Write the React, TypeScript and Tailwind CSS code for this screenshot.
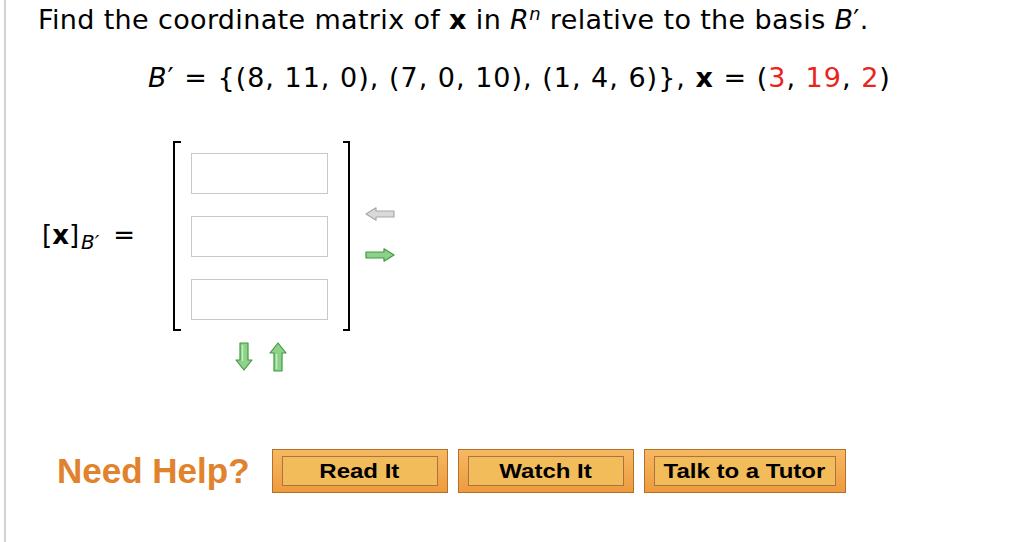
import React from 'react'

const math = { fontFamily: '"DejaVu Sans", Verdana, sans-serif' }

function HArrow({ dir, color }: { dir: 'left' | 'right'; color: 'gray' | 'green' }) {
  const fill = color === 'gray' ? '#d9d9d9' : '#8fd18a'
  const stroke = color === 'gray' ? '#a8a8a8' : '#3f9a3f'
  const d =
    dir === 'right'
      ? 'M1 4 H19 V0.8 L29 7 L19 13.2 V10 H1 Z'
      : 'M29 4 H11 V0.8 L1 7 L11 13.2 V10 H29 Z'
  return (
    <svg width="30" height="14" viewBox="0 0 30 14">
      <path d={d} fill={fill} stroke={stroke} strokeWidth="1.2" strokeLinejoin="round" />
    </svg>
  )
}

function VArrow({ dir }: { dir: 'up' | 'down' }) {
  const d =
    dir === 'down'
      ? 'M5 1 H13 V18 H17 L9 28 L1 18 H5 Z'
      : 'M5 29 H13 V11 H17 L9 1 L1 11 H5 Z'
  return (
    <svg width="18" height="30" viewBox="0 0 18 30">
      <path d={d} fill="#8fd18a" stroke="#3f9a3f" strokeWidth="1.2" strokeLinejoin="round" />
      <path d={dir === 'down' ? 'M7.5 3 V19' : 'M7.5 12 V27'} stroke="#c4ecc0" strokeWidth="1.5" />
    </svg>
  )
}

function HelpButton({ label, width }: { label: string; width: string }) {
  return (
    <div
      className={`${width} h-[44px] border border-[#b36f2c] bg-gradient-to-b from-[#f7b862] to-[#ee9b3c] px-[9px] py-[6px]`}
    >
      <div className="h-full border border-[#a9743f] bg-[#f3bc5a] flex items-center justify-center">
        <span
          className="inline-block scale-x-120 text-[20px] font-bold text-black"
          style={{ fontFamily: '"Liberation Sans", Arial, sans-serif' }}
        >
          {label}
        </span>
      </div>
    </div>
  )
}

export default function App() {
  return (
    <div className="w-[1024px] h-[542px] bg-white overflow-hidden">
      <div className="ml-[4px] h-full border-l-2 border-[#d2d2d2] pl-[32px] pt-[1px]" style={math}>
        <p className="text-[27px] leading-[38px] tracking-[0.35px] text-black">
          Find the coordinate matrix of <b>x</b> in <i>R</i>
          <sup className="italic text-[18px]">n</sup> relative to the basis <i>B</i>′.
        </p>

        <p className="mt-[20px] pl-[110px] text-[27px] leading-[38px] tracking-[1px] text-black">
          <i>B</i>′ = {'{'}(8, 11, 0), (7, 0, 10), (1, 4, 6){'}'}, <b>x</b> = (
          <span className="text-[#e8261c]">3</span>, <span className="text-[#e8261c]">19</span>,{' '}
          <span className="text-[#e8261c]">2</span>)
        </p>

        <div className="mt-[44px] flex items-start">
          <div className="w-[135px] h-[188px] pl-[4px] flex items-center text-[26px] text-black">
            <span>
              [<b>x</b>]<sub className="italic text-[20px] ml-[2px]">B′</sub>
              <span className="ml-[14px]">=</span>
            </span>
          </div>
          <div className="flex flex-col items-center">
            <div className="flex items-stretch h-[190px]">
              <div className="w-[8px] border-l-2 border-y-2 border-black" />
              <div className="ml-[10px] mr-[15px] flex flex-col justify-center gap-[22px]">
                <input className="block w-[137px] h-[41px] border border-[#c8c8c8] bg-white" />
                <input className="block w-[137px] h-[41px] border border-[#c8c8c8] bg-white" />
                <input className="block w-[137px] h-[41px] border border-[#c8c8c8] bg-white" />
              </div>
              <div className="w-[7px] border-r-2 border-y-2 border-black" />
            </div>
            <div className="mt-[11px] flex gap-[16px] pr-[2px]">
              <VArrow dir="down" />
              <VArrow dir="up" />
            </div>
          </div>
          <div className="ml-[15px] mt-[66px] flex flex-col gap-[27px]">
            <HArrow dir="left" color="gray" />
            <HArrow dir="right" color="green" />
          </div>
        </div>

        <div className="mt-[77px] flex items-center">
          <span
            className="ml-[19px] mr-[22px] text-[35px] leading-[44px] text-[#e0832c] font-semibold"
            style={{ fontFamily: '"Liberation Sans", Arial, sans-serif' }}
          >
            Need Help?
          </span>
          <div className="flex gap-[10px]">
            <HelpButton label="Read It" width="w-[176px]" />
            <HelpButton label="Watch It" width="w-[176px]" />
            <HelpButton label="Talk to a Tutor" width="w-[202px]" />
          </div>
        </div>
      </div>
    </div>
  )
}
